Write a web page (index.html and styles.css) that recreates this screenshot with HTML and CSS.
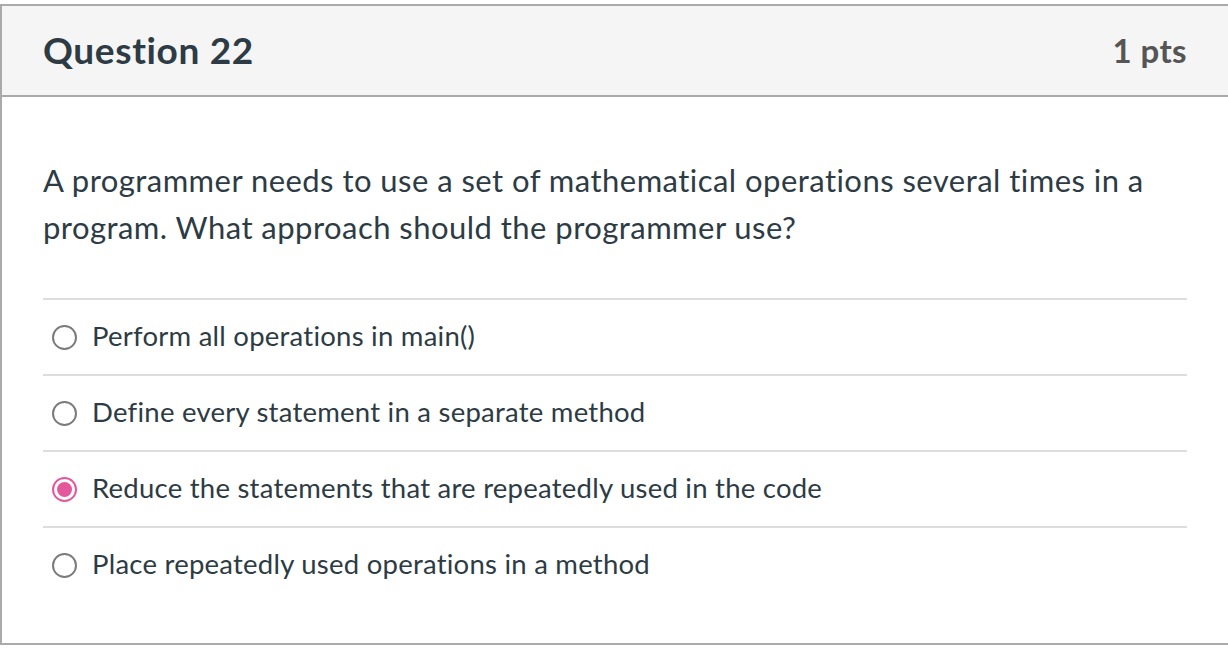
FILE: index.html
```html
<!DOCTYPE html>
<html>
<head>
<meta charset="utf-8">
<link rel="stylesheet" href="styles.css">
</head>
<body>
<div class="card">
  <div class="header">
    <h2 class="title">Question 22</h2>
    <div class="pts">1 pts</div>
  </div>
  <div class="body">
    <p class="question">A programmer needs to use a set of mathematical operations several times in a program. What approach should the programmer use?</p>
    <div class="answers">
      <div class="answer"><span class="radio"></span><span class="label">Perform all operations in main()</span></div>
      <div class="answer"><span class="radio"></span><span class="label">Define every statement in a separate method</span></div>
      <div class="answer"><span class="radio checked"></span><span class="label">Reduce the statements that are repeatedly used in the code</span></div>
      <div class="answer"><span class="radio"></span><span class="label">Place repeatedly used operations in a method</span></div>
    </div>
  </div>
</div>
</body>
</html>
```
FILE: styles.css
```css
html, body {
  margin: 0;
  padding: 0;
  background: #fff;
  overflow: hidden;
}
body {
  padding-top: 4px;
  font-family: Lato, "Open Sans", sans-serif;
  color: #2d3b45;
}
.card {
  border: 2px solid #aaaaaa;
  border-right: 0;
  height: 641px;
  box-sizing: border-box;
}
.header {
  height: 91px;
  box-sizing: border-box;
  background: #f5f5f5;
  border-bottom: 2px solid #aaaaaa;
  display: flex;
  align-items: center;
  justify-content: space-between;
  padding: 0 41px 2px 41px;
}
.title {
  margin: 0;
  font-size: 37px;
  font-weight: 700;
  letter-spacing: 0.65px;
  color: #2d3b45;
}
.pts {
  font-size: 33px;
  font-weight: 700;
  letter-spacing: 0.4px;
  color: #555555;
}
.body {
  padding: 0 41px 0 41px;
}
.question {
  margin: 60px 0 0 0;
  font-size: 31px;
  letter-spacing: 0.46px;
  line-height: 47px;
}
.answers {
  margin-top: 47px;
}
.answer {
  border-top: 2px solid #dddddd;
  height: 74px;
  display: flex;
  align-items: center;
  font-size: 27.5px;
  letter-spacing: 0.24px;
}
.radio {
  width: 21px;
  height: 21px;
  border: 2px solid #7b7b7b;
  border-radius: 50%;
  margin-left: 9px;
  margin-right: 15px;
  flex: none;
  box-sizing: content-box;
  position: relative;
}
.radio.checked {
  border-color: #e4589b;
}
.radio.checked::after {
  content: "";
  position: absolute;
  left: 3px;
  top: 3px;
  width: 15px;
  height: 15px;
  border-radius: 50%;
  background: #e4589b;
}
.label {
  color: #2d3b45;
  margin-top: -3px;
}
```
